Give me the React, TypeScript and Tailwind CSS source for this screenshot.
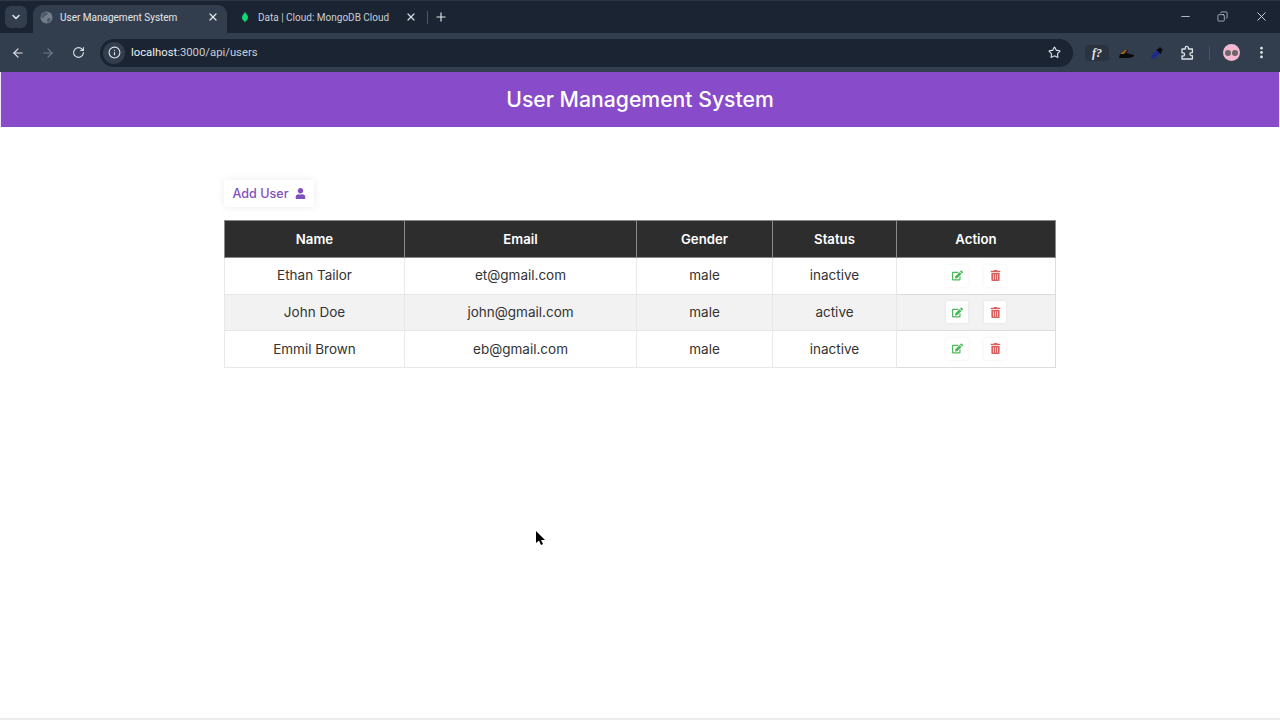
import { ArrowLeft, ArrowRight, ChevronDown, Copy, Info, Minus, MoreVertical, Plus, RotateCw, Star, X } from "lucide-react";
import { FaEdit, FaTrashAlt, FaUser } from "react-icons/fa";

const users = [
  { name: "Ethan Tailor", email: "et@gmail.com", gender: "male", status: "inactive" },
  { name: "John Doe", email: "john@gmail.com", gender: "male", status: "active" },
  { name: "Emmil Brown", email: "eb@gmail.com", gender: "male", status: "inactive" },
];

function BrowserChrome() {
  return (
    <div className="bg-[#1a2433] h-[72px] border-t border-[#2c3644] flex flex-col shrink-0" style={{ fontFamily: "Roboto, sans-serif" }}>
      {/* tab strip */}
      <div className="h-[32px] flex items-end pl-[5px] text-[#c9ced6] text-[10px]">
        <div className="w-[22px] h-[22px] mb-[5px] rounded-md bg-[#323e4e] flex items-center justify-center mr-[6px]">
          <ChevronDown size={12} strokeWidth={3} color="#e3e6ea" />
        </div>
        <div className="w-[194px] h-[28px] bg-[#323e4e] rounded-t-[9px] flex items-center pl-[7px] pr-[8px] pb-[4px] text-[#e3e6ea]">
          <svg width="13" height="13" viewBox="0 0 13 13" className="mr-[7px] shrink-0">
            <circle cx="6.5" cy="6.5" r="6" fill="#737d8a" />
            <path d="M5 1 8 2 7 4 4.5 5 3 7.5 1 6C1 4 3 1.5 5 1ZM8 7l3 .5-1.5 3.5L7.5 11.5 7 9Z" fill="#4e5967" />
          </svg>
          <span className="flex-1 whitespace-nowrap">User Management System</span>
          <X size={12} strokeWidth={2.5} color="#e3e6ea" />
        </div>
        <div className="w-[198px] h-[28px] flex items-center pl-[15px] pr-[8px] pb-[4px]">
          <svg width="6" height="11" viewBox="0 0 6 11" className="mr-[10px] shrink-0">
            <path d="M3 0C1 2.5 0 4 0 5.5 0 7.5 1.5 8.8 2.6 9.4L3 11l.4-1.6C4.5 8.8 6 7.5 6 5.5 6 4 5 2.5 3 0Z" fill="#13d872" />
          </svg>
          <span className="flex-1 whitespace-nowrap">Data | Cloud: MongoDB Cloud</span>
          <X size={12} strokeWidth={2.5} color="#d6dae0" />
        </div>
        <div className="h-[28px] ml-[2px] pb-[4px] flex items-center gap-[6px]">
          <div className="w-px h-[13px] bg-[#4a5564]" />
          <Plus size={14} strokeWidth={2} color="#e3e6ea" />
        </div>
        <div className="ml-auto h-[32px] pb-[1px] flex items-center gap-[25px] pr-[11px] text-[#d6dae0]">
          <Minus size={13} strokeWidth={1.5} />
          <Copy size={11} strokeWidth={1.5} className="-scale-x-100" />
          <X size={15} strokeWidth={1.5} className="ml-[1px]" />
        </div>
      </div>
      {/* toolbar */}
      <div className="flex-1 bg-[#323e4e] flex items-center pl-[11px]">
        <ArrowLeft size={14} strokeWidth={2} color="#dfe3e8" />
        <ArrowRight size={14} strokeWidth={2} color="#6f7a88" className="ml-[16px]" />
        <RotateCw size={13} strokeWidth={2} color="#dfe3e8" className="ml-[17px]" />
        <div className="ml-[15px] w-[973px] h-[28px] rounded-full bg-[#1a2433] flex items-center pl-[3px] pr-[12px]">
          <div className="w-[22px] h-[22px] rounded-full bg-[#323e4e] flex items-center justify-center">
            <Info size={13} strokeWidth={2} color="#e3e6ea" />
          </div>
          <span className="ml-[6px] mt-[2px] flex-1 text-[11.3px] text-[#c9ced6]">
            <span className="text-[#eef0f3]">localhost</span>:3000/api/users
          </span>
          <Star size={13} strokeWidth={2} color="#e3e6ea" />
        </div>
        <div className="w-[24px] h-[16px] ml-[12px] flex items-center justify-center text-[12px] italic font-bold text-[#e3e6ea] bg-[#2b3340] rounded-sm leading-none" style={{ fontFamily: "'Liberation Serif', serif" }}>
          f?
        </div>
        <svg width="16" height="10" viewBox="0 0 16 10" className="ml-[10px] mt-[3px]">
          <path d="M1 5 6 1h3L7 4l8 2c0 2-3 3-7 3H0Z" fill="#0b0b0b" />
          <path d="M1 5 6 1h2L5 5Z" fill="#a8641c" />
        </svg>
        <svg width="14" height="14" viewBox="0 0 14 14" className="ml-[15px]">
          <path d="M1 13 2 9l5-5 3 3-5 5Z" fill="#1c2a8c" />
          <path d="M8 3l2-2 3 3-2 2 .5 1-1 1-4-4 1-1Z" fill="#0a0a0a" />
        </svg>
        <svg width="15" height="15" viewBox="0 0 15 15" fill="none" stroke="#dfe3e8" strokeWidth="1.3" strokeLinejoin="round" className="ml-[16px]">
          <path d="M2 4h3.2V3a1.6 1.6 0 0 1 3.2 0v1h4v3.6h-1a1.5 1.5 0 0 0 0 3h1V14H2v-3h1a1.6 1.6 0 0 0 0-3.2H2Z" />
        </svg>
        <div className="w-px h-[14px] bg-[#4a5564] ml-[14px]" />
        <div className="ml-[13px] w-[17px] h-[17px] rounded-full bg-[#f3b8cf] flex items-center justify-center gap-px">
          <div className="w-[6px] h-[6px] rounded-full bg-[#6b6468]" />
          <div className="w-[6px] h-[6px] rounded-full bg-[#6b6468]" />
        </div>
        <MoreVertical size={15} strokeWidth={2.5} color="#dfe3e8" className="ml-[14px]" />
      </div>
    </div>
  );
}

export default function App() {
  return (
    <div className="h-[720px] w-[1280px] overflow-hidden bg-white flex flex-col relative" style={{ fontFamily: "Inter, 'Noto Sans', sans-serif" }}>
      <BrowserChrome />
      <header className="h-[55px] bg-[#884bca] flex items-center justify-center shrink-0 border-l border-r border-[#f0e8f8] pt-[1px]">
        <h1 className="text-white text-[21.2px] font-medium">User Management System</h1>
      </header>
      <main className="pl-[224px] pt-[53px]">
        <button className="h-[27px] w-[90px] flex items-center justify-center gap-[6px] bg-white shadow-[0_0_8px_rgba(0,0,0,0.08)] rounded-[2px] text-[#8250bd] text-[12.6px] font-medium">
          <span className="mt-[2px]">Add User</span>
          <FaUser size={11} />
        </button>
        <table className="mt-[13px] w-[831px] table-fixed border-collapse text-[13.5px] text-[#333333]">
          <colgroup>
            <col className="w-[180px]" />
            <col className="w-[232px]" />
            <col className="w-[136px]" />
            <col className="w-[124px]" />
            <col className="w-[159px]" />
          </colgroup>
          <thead>
            <tr className="h-[37px] bg-[#2d2d2d] text-white">
              {["Name", "Email", "Gender", "Status", "Action"].map((h) => (
                <th key={h} className="border border-[#8a8a8a] font-semibold text-[13.2px] pt-[1px]">
                  {h}
                </th>
              ))}
            </tr>
          </thead>
          <tbody>
            {users.map((u, i) => (
              <tr key={u.email} className={i === 1 ? "h-[36.6px] bg-[#f2f2f2]" : "h-[36.6px] bg-white"}>
                <td className={i === 0 ? "border border-[#e8e8e8] text-center pb-[1px]" : "border border-[#e8e8e8] text-center"}>{u.name}</td>
                <td className={i === 0 ? "border border-[#e8e8e8] text-center pb-[1px]" : "border border-[#e8e8e8] text-center"}>{u.email}</td>
                <td className={i === 0 ? "border border-[#e8e8e8] text-center pb-[1px]" : "border border-[#e8e8e8] text-center"}>{u.gender}</td>
                <td className={i === 0 ? "border border-[#e8e8e8] text-center pb-[1px]" : "border border-[#e8e8e8] text-center"}>{u.status}</td>
                <td className="border border-[#dcdcdc]">
                  <div className="flex items-center justify-center gap-[16px]">
                    <span className="w-[22px] h-[22px] bg-white rounded-[2px] shadow-[0_0_4px_rgba(0,0,0,0.06)] flex items-center justify-center">
                      <FaEdit size={11} color="#4cb85c" />
                    </span>
                    <span className="w-[22px] h-[22px] bg-white rounded-[2px] shadow-[0_0_4px_rgba(0,0,0,0.06)] flex items-center justify-center">
                      <FaTrashAlt size={11} color="#d9605f" />
                    </span>
                  </div>
                </td>
              </tr>
            ))}
          </tbody>
        </table>
      </main>
      {/* mouse pointer */}
      <svg width="10" height="15" viewBox="0 0 10 15" className="absolute left-[536px] top-[531px]">
        <path d="M0 0v12l3-2.5L5 14l2-1-2-4h4Z" fill="#000" />
      </svg>
      <div className="absolute bottom-0 left-0 right-0 h-[2px] bg-[#ececec]" />
    </div>
  );
}
